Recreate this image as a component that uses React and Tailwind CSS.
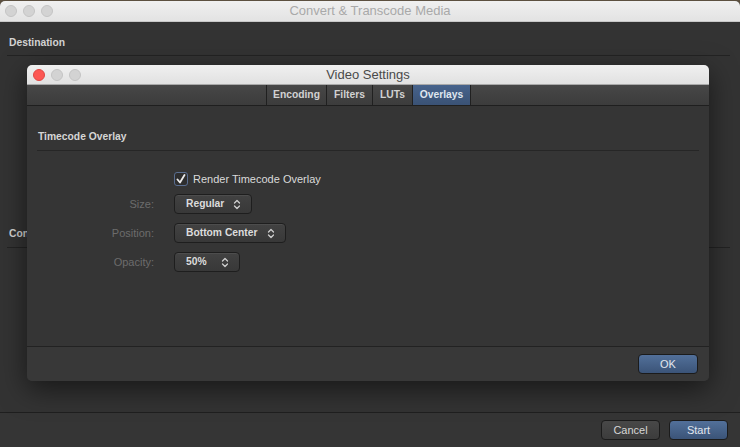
import React from "react";

const font = { fontFamily: '"Liberation Sans", Arial, sans-serif' };

function Lights({ active }) {
  return (
    <div className="flex items-center gap-[6px]">
      <span
        className={
          active
            ? "w-[12px] h-[12px] rounded-full bg-[#fc5753] border border-[#df4744]"
            : "w-[12px] h-[12px] rounded-full bg-[#d3d3d3] border border-[#c4c4c4]"
        }
      />
      <span className="w-[12px] h-[12px] rounded-full bg-[#d3d3d3] border border-[#c4c4c4]" />
      <span className="w-[12px] h-[12px] rounded-full bg-[#d3d3d3] border border-[#c4c4c4]" />
    </div>
  );
}

function UpDown() {
  return (
    <svg width="8" height="11" viewBox="0 0 8 11" fill="none" stroke="#cfcfcf" strokeWidth="1.3" strokeLinecap="round" strokeLinejoin="round">
      <path d="M1.5 4 L4 1.5 L6.5 4" />
      <path d="M1.5 7 L4 9.5 L6.5 7" />
    </svg>
  );
}

function Popup({ label, width }) {
  return (
    <div
      className="h-[20px] flex items-center justify-between pl-[11px] pr-[10px] rounded-[4px] border border-[#1e1e1e] bg-gradient-to-b from-[#424242] to-[#383838] shadow-[inset_0_1px_0_rgba(255,255,255,0.06)]"
      style={{ width }}
    >
      <span className="text-[10.3px] font-bold text-[#dcdcdc]">{label}</span>
      <UpDown />
    </div>
  );
}

function Row({ label, children, className }) {
  return (
    <div className={"flex items-center h-[20px] " + className}>
      <div className="w-[137px] text-right pr-[20px] text-[11px] text-[#6c6c6c]">{label}</div>
      {children}
    </div>
  );
}

function Button({ children, blue, width }) {
  return (
    <div
      className={
        blue
          ? "h-[20px] flex items-center justify-center rounded-[4px] border border-[#1b1b1b] bg-gradient-to-b from-[#52709a] to-[#3b5478] text-[11px] text-[#e2e6ee]"
          : "h-[20px] flex items-center justify-center rounded-[4px] border border-[#1b1b1b] bg-gradient-to-b from-[#484848] to-[#3c3c3c] text-[11px] text-[#d6d6d6]"
      }
      style={{ width }}
    >
      {children}
    </div>
  );
}

export default function App() {
  const tabs = ["Encoding", "Filters", "LUTs", "Overlays"];
  const tabW = [60, 46, 40, 58];
  return (
    <div className="w-[740px] h-[447px] overflow-hidden bg-[#5c5040] relative" style={font}>
      {/* main window */}
      <div className="absolute left-0 top-[1px] w-[740px] h-[446px] rounded-t-[5px] overflow-hidden bg-[#333333] flex flex-col">
        <div className="h-[21px] shrink-0 bg-gradient-to-b from-[#f0f0f0] to-[#e3e3e3] border-b border-[#c8c8c8] flex items-center relative">
          <div className="pl-[5px]">
            <Lights />
          </div>
          <div className="absolute inset-0 flex items-center justify-center text-[13px] text-[#a9a9a9]">
            Convert &amp; Transcode Media
          </div>
        </div>

        <div className="px-[7px] pt-[14px]">
          <div className="pl-[2px] text-[10.3px] font-bold text-[#d4d4d4] h-[14px] leading-[14px]">Destination</div>
          <div className="mt-[5px] mr-[3px] h-[1px] bg-[#232323]" />
        </div>

        <div className="px-[7px] pt-[171px]">
          <div className="pl-[2px] text-[10.3px] font-bold text-[#d4d4d4] h-[14px] leading-[14px]">Conversion</div>
          <div className="mt-[6px] mr-[3px] h-[1px] bg-[#232323]" />
        </div>

        <div className="flex-1" />
        <div className="h-[1px] bg-[#1f1f1f]" />
        <div className="h-[34px] bg-[#353535] flex items-center justify-end gap-[9px] pr-[12px]">
          <Button width={59}>Cancel</Button>
          <Button blue width={59}>Start</Button>
        </div>
      </div>

      {/* Video Settings sheet */}
      <div className="absolute left-[27px] top-[65px] w-[682px] h-[316px] rounded-[5px] overflow-hidden bg-[#353535] flex flex-col shadow-[0_8px_28px_rgba(0,0,0,0.55)]">
        <div className="h-[20px] shrink-0 bg-gradient-to-b from-[#f0f0f0] to-[#e1e1e1] border-b border-[#a9a9a9] flex items-center relative">
          <div className="pl-[6px]">
            <Lights active />
          </div>
          <div className="absolute inset-0 flex items-center justify-center text-[13px] text-[#4a4a4a]">
            Video Settings
          </div>
        </div>

        <div className="h-[21px] shrink-0 bg-gradient-to-b from-[#474747] to-[#3c3c3c] border-b border-[#1f1f1f] flex justify-center pl-[1px]">
          <div className="flex border-l border-[#202020]">
            {tabs.map((t, i) => (
              <div
                key={t}
                className={
                  t === "Overlays"
                    ? "h-full flex items-center justify-center border-r border-[#202020] bg-gradient-to-b from-[#47638c] to-[#3a5275] text-[10.3px] font-bold text-[#dfe5ee]"
                    : "h-full flex items-center justify-center border-r border-[#202020] text-[10.3px] font-bold text-[#d2d2d2]"
                }
                style={{ width: tabW[i] }}
              >
                {t}
              </div>
            ))}
          </div>
        </div>

        <div className="flex-1 flex flex-col px-[10px]">
          <div className="pt-[24px] pl-[1px] text-[10.3px] font-bold text-[#d6d6d6] h-[44px] leading-[14px]">Timecode Overlay</div>
          <div className="h-[1px] bg-[#262626]" />

          <div className="pt-[20px] flex flex-col">
            <div className="flex items-center h-[16px] pl-[137px]">
              <div className="w-[14px] h-[14px] rounded-[3px] border border-[#5a6e90] bg-[#2e2e2e] flex items-center justify-center">
                <svg width="10" height="10" viewBox="0 0 10 10" fill="none" stroke="#ececec" strokeWidth="1.8" strokeLinecap="round" strokeLinejoin="round">
                  <path d="M1.5 5.5 L4 8.5 L8.5 1" />
                </svg>
              </div>
              <span className="ml-[5px] text-[11px] text-[#dadada]">Render Timecode Overlay</span>
            </div>
            <Row label="Size:" className="mt-[7px]">
              <Popup label="Regular" width={78} />
            </Row>
            <Row label="Position:" className="mt-[9px]">
              <Popup label="Bottom Center" width={112} />
            </Row>
            <Row label="Opacity:" className="mt-[9px]">
              <Popup label="50%" width={66} />
            </Row>
          </div>
          <div className="flex-1" />
        </div>

        <div className="h-[1px] bg-[#222222]" />
        <div className="h-[34px] shrink-0 bg-[#383838] flex items-center justify-end pr-[11px]">
          <Button blue width={60}>OK</Button>
        </div>
      </div>
    </div>
  );
}
